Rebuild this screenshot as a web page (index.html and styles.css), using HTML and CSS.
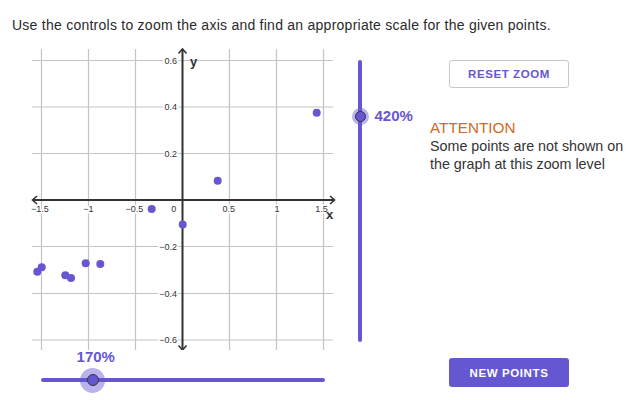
FILE: index.html
```html
<!DOCTYPE html>
<html>
<head>
<meta charset="utf-8">
<link rel="stylesheet" href="styles.css">
</head>
<body>
<div class="app">
  <p class="title">Use the controls to zoom the axis and find an appropriate scale for the given points.</p>
  <div class="main">
    <div class="left">
      <svg class="graph" width="345" height="310" viewBox="0 40 345 310">
        <g class="grid">
          <line x1="41.5" y1="49" x2="41.5" y2="350"/>
          <line x1="88.5" y1="49" x2="88.5" y2="350"/>
          <line x1="135.5" y1="49" x2="135.5" y2="350"/>
          <line x1="229.5" y1="49" x2="229.5" y2="350"/>
          <line x1="276.5" y1="49" x2="276.5" y2="350"/>
          <line x1="323.5" y1="49" x2="323.5" y2="350"/>
          <line x1="32" y1="60.5" x2="333" y2="60.5"/>
          <line x1="32" y1="107" x2="333" y2="107"/>
          <line x1="32" y1="153.5" x2="333" y2="153.5"/>
          <line x1="32" y1="246.5" x2="333" y2="246.5"/>
          <line x1="32" y1="293.5" x2="333" y2="293.5"/>
          <line x1="32" y1="340" x2="333" y2="340"/>
        </g>
        <g class="axes">
          <line x1="33" y1="200" x2="334" y2="200"/>
          <line x1="182.5" y1="49" x2="182.5" y2="350"/>
          <polyline points="37,196 32.5,200 37,204"/>
          <polyline points="330,196 334.5,200 330,204"/>
          <polyline points="178.5,53.5 182.5,49 186.5,53.5"/>
          <polyline points="178.5,345.5 182.5,350 186.5,345.5"/>
        </g>
        <g class="ticks xt">
          <text x="40" y="212">−1.5</text>
          <text x="88.3" y="212">−1</text>
          <text x="134.5" y="212">−0.5</text>
          <text x="173.7" y="212">0</text>
          <text x="228.7" y="212">0.5</text>
          <text x="277" y="212">1</text>
          <text x="321.5" y="212">1.5</text>
        </g>
        <g class="ticks yt">
          <text x="177" y="63.5">0.6</text>
          <text x="177" y="110">0.4</text>
          <text x="177" y="156.5">0.2</text>
          <text x="177" y="249.5">−0.2</text>
          <text x="177" y="296.5">−0.4</text>
          <text x="177" y="343">−0.6</text>
        </g>
        <text class="axlabel" x="190" y="66">y</text>
        <text class="axlabel" x="326" y="219">x</text>
        <g class="pts">
          <circle cx="151.7" cy="209" r="4"/>
          <circle cx="182.7" cy="224.5" r="4"/>
          <circle cx="217.7" cy="180.7" r="4"/>
          <circle cx="316.7" cy="112.7" r="4"/>
          <circle cx="37.3" cy="271.7" r="4"/>
          <circle cx="41.7" cy="267.3" r="4"/>
          <circle cx="65.3" cy="275.3" r="4"/>
          <circle cx="71" cy="278" r="4"/>
          <circle cx="85.7" cy="263.3" r="4"/>
          <circle cx="100.3" cy="264" r="4"/>
        </g>
      </svg>
      <div class="hslider">
        <div class="htrack">
          <div class="hknob" style="left:18.2%">
            <span class="hval">170%</span>
          </div>
        </div>
      </div>
    </div>
    <div class="vslider">
      <div class="vtrack">
        <div class="vknob" style="top:20.2%">
          <span class="vval">420%</span>
        </div>
      </div>
    </div>
    <div class="panel">
      <button class="btn reset">RESET ZOOM</button>
      <div class="notice">
        <div class="att">ATTENTION</div>
        <p class="msg">Some points are not shown on<br>the graph at this zoom level</p>
      </div>
      <button class="btn newpts">NEW POINTS</button>
    </div>
  </div>
</div>
</body>
</html>
```
FILE: styles.css
```css
html, body {
  margin: 0;
  padding: 0;
  background: #fff;
}
.app {
  width: 640px;
  height: 400px;
  overflow: hidden;
  font-family: "Liberation Sans", Arial, sans-serif;
  color: #333;
}
.title {
  margin: 0;
  height: 40px;
  box-sizing: border-box;
  padding: 15px 0 0 12px;
  font-size: 14px;
  line-height: 20px;
  letter-spacing: 0.25px;
  color: #2b2b2b;
}
.main {
  display: flex;
  height: 360px;
}
.left {
  width: 345px;
  display: flex;
  flex-direction: column;
}
.graph {
  display: block;
}
.grid line {
  stroke: #c4c4c4;
  stroke-width: 1.2;
}
.axes line, .axes polyline {
  stroke: #333;
  stroke-width: 2;
  fill: none;
}
.axes polyline {
  stroke-width: 1.6;
}
.ticks text {
  font-family: "Liberation Sans", Arial, sans-serif;
  font-size: 9px;
  fill: #333;
  stroke: #fff;
  stroke-width: 3px;
  paint-order: stroke;
}
.xt text {
  text-anchor: middle;
}
.yt text {
  text-anchor: end;
}
.axlabel {
  font-family: "Liberation Sans", Arial, sans-serif;
  font-size: 13px;
  font-weight: bold;
  fill: #333;
}
.pts circle {
  fill: #6557d2;
}
.hslider {
  height: 50px;
  padding: 28px 0 0 41px;
  box-sizing: border-box;
}
.htrack {
  position: relative;
  width: 284px;
  height: 4px;
  border-radius: 2px;
  background: #6557d2;
}
.hknob {
  position: absolute;
  top: 2px;
  width: 25px;
  height: 25px;
  margin: -12.5px 0 0 -12.5px;
  border-radius: 50%;
  background: rgba(101, 87, 210, 0.45);
  display: flex;
  align-items: center;
  justify-content: center;
}
.hknob::after, .vknob::after {
  content: "";
  width: 10px;
  height: 10px;
  border-radius: 50%;
  background: #6557d2;
  border: 1.5px solid #333;
}
.hval {
  position: absolute;
  bottom: 28px;
  left: 50%;
  transform: translateX(-42%);
  font-size: 15px;
  font-weight: bold;
  color: #6557d2;
  white-space: nowrap;
}
.vslider {
  width: 30px;
  padding-top: 20px;
  display: flex;
  justify-content: center;
}
.vtrack {
  position: relative;
  width: 4px;
  height: 282px;
  border-radius: 2px;
  background: #6557d2;
}
.vknob {
  position: absolute;
  left: 2px;
  width: 17px;
  height: 17px;
  margin: -8.5px 0 0 -8.5px;
  border-radius: 50%;
  background: rgba(101, 87, 210, 0.45);
  display: flex;
  align-items: center;
  justify-content: center;
}
.vknob::after {
  width: 9px;
  height: 9px;
}
.vval {
  position: absolute;
  left: 23px;
  top: -1px;
  font-size: 15px;
  font-weight: bold;
  color: #6557d2;
  white-space: nowrap;
}
.panel {
  margin-left: 55px;
  width: 210px;
  display: flex;
  flex-direction: column;
  padding-top: 20px;
  padding-bottom: 13px;
  box-sizing: border-box;
}
.btn {
  margin: 0 0 0 19px;
  width: 120px;
  height: 28px;
  box-sizing: border-box;
  border-radius: 3px;
  font-family: "Liberation Sans", Arial, sans-serif;
  font-weight: bold;
  font-size: 11.5px;
  letter-spacing: 0.6px;
  padding: 0;
  cursor: pointer;
}
.reset {
  background: #fff;
  border: 1px solid #c8c8c8;
  color: #6557d2;
}
.newpts {
  margin-top: auto;
  background: #6557d2;
  border: none;
  color: #fff;
  height: 29px;
}
.notice {
  margin-top: 31px;
}
.att {
  font-size: 15.3px;
  line-height: 18px;
  color: #d2691e;
}
.msg {
  margin: 0;
  font-size: 14.3px;
  line-height: 18px;
  color: #333;
}
```
